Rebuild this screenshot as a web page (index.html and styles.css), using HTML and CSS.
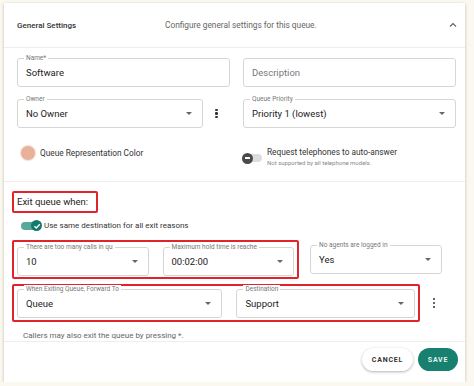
FILE: index.html
```html
<!DOCTYPE html>
<html lang="en">
<head>
  <meta charset="UTF-8">
  <title>Queue General Settings</title>
  <link rel="stylesheet" href="styles.css">
</head>
<body>

<div class="card">
  <div class="card-header">
    <span class="card-title">General Settings</span>
    <span class="card-subtitle">Configure general settings for this queue.</span>
    <svg class="chevron" width="10" height="10" viewBox="0 0 10 10">
      <path d="M2 6.5 L5 3.5 L8 6.5" fill="none" stroke="#666" stroke-width="1.2"/>
    </svg>
  </div>

  <div class="section">
    <div class="row">
      <div class="field w213">
        <span class="field-label">Name*</span>
        <span class="field-value">Software</span>
      </div>
      <div class="field w213">
        <span class="field-value placeholder">Description</span>
      </div>
    </div>

    <div class="row">
      <div class="with-menu">
        <div class="field select w186">
          <span class="field-label">Owner</span>
          <span class="field-value">No Owner</span>
          <span class="caret"></span>
        </div>
        <span class="kebab"><i></i><i></i><i></i></span>
      </div>
      <div class="field select w213">
        <span class="field-label">Queue Priority</span>
        <span class="field-value">Priority 1 (lowest)</span>
        <span class="caret"></span>
      </div>
    </div>

    <div class="row options">
      <div class="color-opt">
        <span class="swatch"></span>
        <span class="opt-text">Queue Representation Color</span>
      </div>
      <div class="switch-opt">
        <span class="switch off"><span class="thumb"></span></span>
        <div>
          <div class="opt-text">Request telephones to auto-answer</div>
          <div class="opt-help">Not supported by all telephone models.</div>
        </div>
      </div>
    </div>
  </div>

  <div class="section exit">
    <div class="red-box heading-box">Exit queue when:</div>

    <div class="switch-row">
      <span class="switch on">
        <span class="thumb">
          <svg width="10" height="10" viewBox="0 0 10 10">
            <path d="M2.4 5.2 L4.3 7 L7.8 3.2" fill="none" stroke="#fff" stroke-width="1.4"/>
          </svg>
        </span>
      </span>
      <span class="opt-text">Use same destination for all exit reasons</span>
    </div>

    <div class="exit-row">
      <div class="red-box">
        <div class="field select w132">
          <span class="field-label">There are too many calls in qu</span>
          <span class="field-value">10</span>
          <span class="caret"></span>
        </div>
        <div class="field select w132">
          <span class="field-label">Maximum hold time is reache</span>
          <span class="field-value">00:02:00</span>
          <span class="caret"></span>
        </div>
      </div>
      <div class="field select w132">
        <span class="field-label">No agents are logged in</span>
        <span class="field-value">Yes</span>
        <span class="caret"></span>
      </div>
    </div>

    <div class="exit-row second">
      <div class="red-box">
        <div class="field select w206">
          <span class="field-label">When Exiting Queue, Forward To</span>
          <span class="field-value">Queue</span>
          <span class="caret"></span>
        </div>
        <div class="field select w179">
          <span class="field-label">Destination</span>
          <span class="field-value">Support</span>
          <span class="caret"></span>
        </div>
      </div>
      <span class="kebab"><i></i><i></i><i></i></span>
    </div>

    <p class="note">Callers may also exit the queue by pressing *.</p>
  </div>

  <div class="actions">
    <button class="btn cancel">CANCEL</button>
    <button class="btn save">SAVE</button>
  </div>
</div>

</body>
</html>
```

FILE: styles.css
```css
body {
  margin: 0;
  background: #fbf8ef;
  font-family: Roboto, "Liberation Sans", sans-serif;
  color: #222;
}

.card {
  margin: 3px 9px 0 4px;
  width: 461px;
  height: 379px;
  background: #fff;
  box-shadow: 0 1px 3px rgba(0, 0, 0, 0.25);
  box-sizing: border-box;
  display: flex;
  flex-direction: column;
}

.card-header {
  height: 45px;
  display: flex;
  align-items: center;
  padding: 0 0 0 13px;
  border-bottom: 1px solid #eee;
  box-sizing: border-box;
  position: relative;
}

.card-title {
  font-size: 8px;
  font-weight: 500;
  width: 148px;
  color: #333;
}

.card-subtitle {
  font-size: 8.3px;
  color: #666;
}

.chevron {
  position: absolute;
  right: 7px;
  top: 17px;
}

.section {
  padding: 10px 0 0 13px;
  border-bottom: 1px solid #eee;
  height: 134px;
  box-sizing: border-box;
}

.row {
  display: flex;
  gap: 13px;
  margin-bottom: 12px;
}

.field {
  position: relative;
  height: 29px;
  border: 1px solid #d6d6d6;
  border-radius: 3px;
  box-sizing: border-box;
  display: flex;
  align-items: center;
  padding: 0 10px 0 8px;
}

.w213 { width: 213px; }
.w186 { width: 186px; }
.w132 { width: 132px; }
.w206 { width: 206px; }
.w179 { width: 179px; }

.field-label {
  position: absolute;
  top: -5px;
  left: 6px;
  padding: 0 2px;
  background: #fff;
  font-size: 6.5px;
  line-height: 8px;
  color: #777;
  white-space: nowrap;
  overflow: hidden;
}

.field-value {
  font-size: 9.5px;
  color: #222;
}

.placeholder {
  color: #777;
}

.caret {
  margin-left: auto;
  width: 0;
  height: 0;
  border-left: 3px solid transparent;
  border-right: 3px solid transparent;
  border-top: 3px solid #666;
}

.with-menu {
  display: flex;
  align-items: center;
}

.kebab {
  width: 27px;
  display: flex;
  flex-direction: column;
  align-items: center;
  gap: 1.5px;
}

.kebab i {
  width: 2.2px;
  height: 2.2px;
  border-radius: 50%;
  background: #333;
}

.options {
  margin-top: 18px;
  align-items: flex-start;
}

.color-opt {
  width: 213px;
  display: flex;
  align-items: center;
  gap: 5px;
  padding-left: 4px;
  box-sizing: border-box;
}

.swatch {
  width: 14px;
  height: 14px;
  border-radius: 50%;
  background: #e8b29a;
  box-shadow: 0 0 0 1px #f5e0d6;
}

.opt-text {
  font-size: 8.3px;
  color: #333;
}

.opt-help {
  font-size: 6px;
  color: #888;
  margin-top: 2px;
}

.switch-opt {
  display: flex;
  align-items: flex-start;
  gap: 5px;
  padding-top: 1px;
}

.switch {
  position: relative;
  width: 19px;
  height: 8px;
  border-radius: 4px;
  flex-shrink: 0;
}

.switch .thumb {
  position: absolute;
  top: -1.5px;
  width: 11px;
  height: 11px;
  border-radius: 50%;
  display: flex;
  align-items: center;
  justify-content: center;
}

.switch.off {
  background: #ddd;
  margin-top: 7px;
}

.switch.off .thumb {
  left: -1px;
  background: #4a4a4a;
}

.switch.off .thumb::after {
  content: "";
  width: 5px;
  height: 1.2px;
  background: #fff;
}

.switch.on {
  background: #5aa89c;
}

.switch.on .thumb {
  right: -2px;
  background: #137a6b;
}

.exit {
  padding: 8px 0 0 8px;
  height: 160px;
}

.red-box {
  border: 2px solid #e0232c;
  border-radius: 2px;
  box-sizing: border-box;
}

.heading-box {
  display: inline-block;
  width: 86px;
  height: 22px;
  padding: 3px 0 0 3px;
  font-size: 9.5px;
  color: #222;
}

.switch-row {
  display: flex;
  align-items: center;
  gap: 4px;
  margin: 8px 0 0 9px;
}

.switch-row .opt-text {
  font-size: 8px;
}

.exit-row {
  display: flex;
  align-items: center;
  gap: 11px;
  margin-top: 10px;
}

.exit-row .red-box {
  display: flex;
  gap: 14px;
  padding: 5px 3px 1px;
  width: 287px;
  height: 39px;
}

.exit-row.second {
  margin-top: 5px;
  gap: 6px;
}

.exit-row.second .red-box {
  width: 408px;
  height: 38px;
  padding-top: 3px;
}

.exit-row.second .kebab {
  width: 16px;
}

.note {
  margin: 9px 0 0 11px;
  font-size: 8px;
  color: #666;
}

.actions {
  display: flex;
  justify-content: flex-end;
  gap: 5px;
  padding: 6px 7px 0 0;
}

.btn {
  height: 23px;
  border: none;
  border-radius: 12px;
  font-family: Roboto, "Liberation Sans", sans-serif;
  font-size: 7px;
  font-weight: 700;
  letter-spacing: 0.8px;
  cursor: pointer;
}

.cancel {
  width: 51px;
  background: #fff;
  color: #333;
  box-shadow: 0 1px 3px rgba(0, 0, 0, 0.3);
}

.save {
  width: 40px;
  background: #17806f;
  color: #e6f4f1;
}
```
